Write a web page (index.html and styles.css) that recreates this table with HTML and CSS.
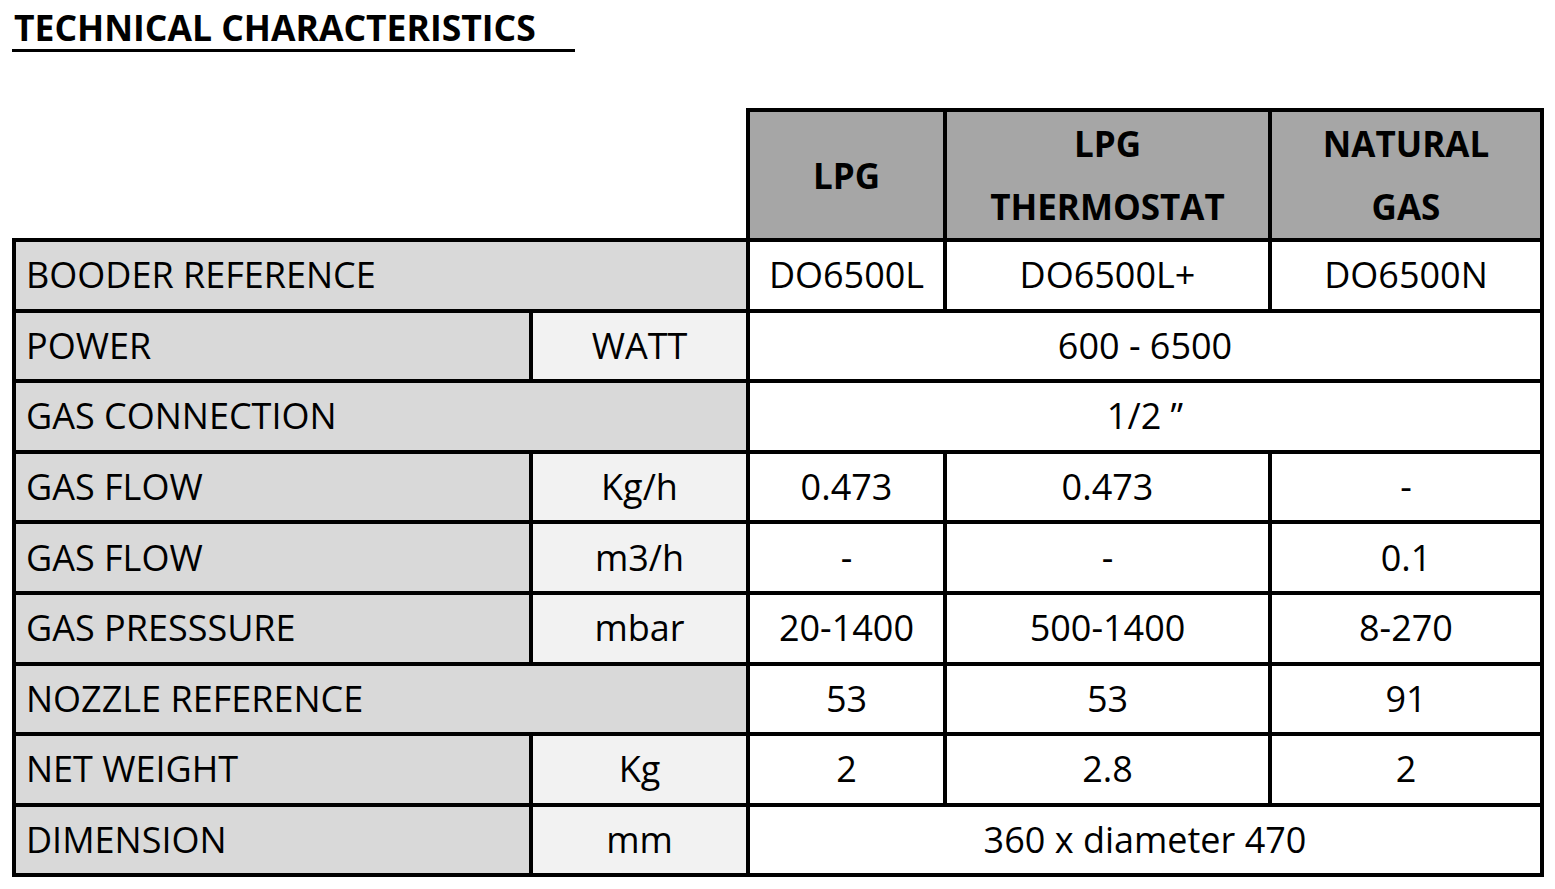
FILE: index.html
```html
<!DOCTYPE html>
<html lang="en">
<head>
  <meta charset="UTF-8">
  <title>Technical Characteristics</title>
  <link rel="stylesheet" href="styles.css">
</head>
<body>
  <h1 class="title"><span>TECHNICAL CHARACTERISTICS</span></h1>

  <table class="specs">
    <colgroup>
      <col class="c-label">
      <col class="c-unit">
      <col class="c-lpg">
      <col class="c-thermo">
      <col class="c-natural">
    </colgroup>
    <thead>
      <tr class="head">
        <th class="blank"></th>
        <th class="blank"></th>
        <th>LPG</th>
        <th>LPG<br>THERMOSTAT</th>
        <th>NATURAL<br>GAS</th>
      </tr>
    </thead>
    <tbody>
      <tr>
        <td class="label" colspan="2">BOODER REFERENCE</td>
        <td>DO6500L</td>
        <td>DO6500L+</td>
        <td>DO6500N</td>
      </tr>
      <tr>
        <td class="label">POWER</td>
        <td class="unit">WATT</td>
        <td colspan="3">600 - 6500</td>
      </tr>
      <tr>
        <td class="label" colspan="2">GAS CONNECTION</td>
        <td colspan="3">1/2 ”</td>
      </tr>
      <tr>
        <td class="label">GAS FLOW</td>
        <td class="unit">Kg/h</td>
        <td>0.473</td>
        <td>0.473</td>
        <td>-</td>
      </tr>
      <tr>
        <td class="label">GAS FLOW</td>
        <td class="unit">m3/h</td>
        <td>-</td>
        <td>-</td>
        <td>0.1</td>
      </tr>
      <tr>
        <td class="label">GAS PRESSSURE</td>
        <td class="unit">mbar</td>
        <td>20-1400</td>
        <td>500-1400</td>
        <td>8-270</td>
      </tr>
      <tr>
        <td class="label" colspan="2">NOZZLE REFERENCE</td>
        <td>53</td>
        <td>53</td>
        <td>91</td>
      </tr>
      <tr>
        <td class="label">NET WEIGHT</td>
        <td class="unit">Kg</td>
        <td>2</td>
        <td>2.8</td>
        <td>2</td>
      </tr>
      <tr>
        <td class="label">DIMENSION</td>
        <td class="unit">mm</td>
        <td colspan="3">360 x diameter 470</td>
      </tr>
    </tbody>
  </table>
</body>
</html>
```

FILE: styles.css
```css
* { margin: 0; padding: 0; box-sizing: border-box; }

body {
  font-family: 'Open Sans', 'Noto Sans', sans-serif;
  background: #ffffff;
  color: #000000;
  padding: 0 12px;
}

.title {
  font-size: 35.5px;
  font-weight: 700;
  line-height: 1;
  padding-top: 10px;
  height: 108px;
}

.title span {
  display: inline-block;
  width: 563px;
  padding-left: 2px;
  padding-bottom: 3px;
  border-bottom: 3px solid #000;
}

.specs {
  border-collapse: collapse;
  table-layout: fixed;
  width: 1528px;
  font-size: 36px;
}

.c-label { width: 517px; }
.c-unit { width: 217px; }
.c-lpg { width: 197px; }
.c-thermo { width: 325px; }
.c-natural { width: 272px; }

.specs th,
.specs td {
  border: 4px solid #000;
  text-align: center;
  vertical-align: middle;
  white-space: nowrap;
}

.specs th {
  background: #a6a6a6;
  font-weight: 700;
  font-size: 35px;
  line-height: 63px;
  height: 129px;
}

.specs th.blank {
  background: #ffffff;
  border: none;
}

.specs td {
  height: 70.6px;
  line-height: 1;
  background: #ffffff;
}

.specs td.label {
  background: #d9d9d9;
  text-align: left;
  padding-left: 10px;
}

.specs td.unit {
  background: #f2f2f2;
  border-left-width: 3px;
}
```
